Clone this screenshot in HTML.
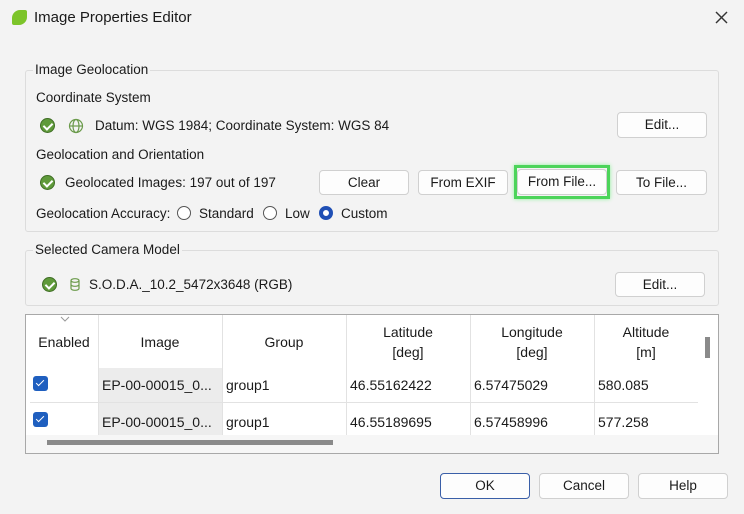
<!DOCTYPE html>
<html><head><style>
*{box-sizing:border-box;margin:0;padding:0}
body{width:744px;height:514px;background:#f3f3f3;font-family:"Liberation Sans",sans-serif;font-size:13.5px;color:#1a1a1a;position:relative;overflow:hidden}
.a{position:absolute;white-space:nowrap}
.btn{position:absolute;background:#fdfdfd;border:1px solid #d0d0d0;border-radius:4px;text-align:center;font-size:13.5px;line-height:24px}
.box{position:absolute;border:1px solid #dcdcdc;border-radius:3px}
.ok{position:absolute;width:15px;height:15px;border-radius:50%;background:#5f9a3a;border:1px solid #3f6e25}
.ok:after{content:"";position:absolute;left:4px;top:2px;width:4px;height:7px;border:solid #fff;border-width:0 2px 2px 0;transform:rotate(45deg)}
.rad{position:absolute;width:14px;height:14px;border:1px solid #555;border-radius:50%;background:#fff}
.cb{position:absolute;width:15px;height:15px;background:#1f5fbf;border-radius:3px}
.cb:after{content:"";position:absolute;left:5px;top:2px;width:3px;height:7px;border:solid #fff;border-width:0 1.5px 1.5px 0;transform:rotate(45deg)}
.th{position:absolute;text-align:center;font-size:14px;line-height:20px;top:322px}
.td{position:absolute;font-size:14px}
.vl{position:absolute;width:1px;background:#e2e2e2;top:315px;height:120px}
</style></head><body>
<div class="a" style="left:12px;top:10px;width:15px;height:15px;background:#7cc42a;border-radius:8px 2px 8px 2px"></div>
<div class="a" style="left:34px;top:9px;font-size:15px">Image Properties Editor</div>
<svg class="a" style="left:715px;top:11px" width="13" height="13" viewBox="0 0 13 13" stroke="#333" stroke-width="1.4"><line x1="1" y1="1" x2="12" y2="12"/><line x1="12" y1="1" x2="1" y2="12"/></svg>

<div class="box" style="left:25px;top:70px;width:694px;height:162px"></div>
<div class="a" style="left:33px;top:62px;background:#f3f3f3;padding:0 2px">Image Geolocation</div>
<div class="a" style="left:36px;top:90px">Coordinate System</div>
<div class="ok" style="left:40px;top:118px"></div>
<svg class="a" style="left:68px;top:118px" width="16" height="16" viewBox="0 0 16 16" fill="none" stroke="#6a9a4a" stroke-width="1.2"><circle cx="8" cy="8" r="6.5"/><ellipse cx="8" cy="8" rx="3" ry="6.5"/><line x1="1.5" y1="8" x2="14.5" y2="8"/></svg>
<div class="a" style="left:95px;top:118px">Datum: WGS 1984; Coordinate System: WGS 84</div>
<div class="btn" style="left:617px;top:112px;width:90px;height:26px">Edit...</div>
<div class="a" style="left:36px;top:147px">Geolocation and Orientation</div>
<div class="ok" style="left:40px;top:175px"></div>
<div class="a" style="left:65px;top:175px">Geolocated Images: 197 out of 197</div>
<div class="btn" style="left:319px;top:170px;width:90px;height:25px">Clear</div>
<div class="btn" style="left:418px;top:170px;width:90px;height:25px">From EXIF</div>
<div class="a" style="left:514px;top:165px;width:96px;height:34px;border:3px solid #4cd45a;box-shadow:0 0 4px #8ef29a"></div>
<div class="btn" style="left:517px;top:169px;width:90px;height:26px;border-color:#d0d0d0">From File...</div>
<div class="btn" style="left:616px;top:170px;width:91px;height:25px">To File...</div>
<div class="a" style="left:36px;top:206px">Geolocation Accuracy:</div>
<div class="rad" style="left:177px;top:206px"></div><div class="a" style="left:199px;top:206px">Standard</div>
<div class="rad" style="left:263px;top:206px"></div><div class="a" style="left:285px;top:206px">Low</div>
<div class="rad" style="left:319px;top:206px;border:4px solid #1f4fb5"></div><div class="a" style="left:341px;top:206px">Custom</div>

<div class="box" style="left:25px;top:250px;width:694px;height:56px"></div>
<div class="a" style="left:33px;top:242px;background:#f3f3f3;padding:0 2px">Selected Camera Model</div>
<div class="ok" style="left:42px;top:277px"></div>
<svg class="a" style="left:70px;top:278px" width="10" height="13" viewBox="0 0 10 13" fill="none" stroke="#6a9a4a" stroke-width="1.2"><ellipse cx="5" cy="2.5" rx="4" ry="1.8"/><path d="M1 2.5v8c0 1 1.8 1.8 4 1.8s4-.8 4-1.8v-8M1 6.5c0 1 1.8 1.8 4 1.8s4-.8 4-1.8"/></svg>
<div class="a" style="left:89px;top:277px">S.O.D.A._10.2_5472x3648 (RGB)</div>
<div class="btn" style="left:615px;top:272px;width:90px;height:25px">Edit...</div>

<div class="a" style="left:25px;top:314px;width:694px;height:140px;background:#fff;border:1px solid #a8a8a8"></div>
<div class="a" style="left:98px;top:368px;width:124px;height:67px;background:#ececec"></div>
<div class="a" style="left:30px;top:402px;width:668px;height:1px;background:#e2e2e2"></div>
<div class="a" style="left:26px;top:435px;width:692px;height:18px;background:#f6f6f6"></div>
<div class="vl" style="left:98px"></div><div class="vl" style="left:222px"></div><div class="vl" style="left:346px"></div><div class="vl" style="left:470px"></div><div class="vl" style="left:594px"></div>
<svg class="a" style="left:60px;top:316px" width="10" height="6" viewBox="0 0 10 6" fill="none" stroke="#999"><path d="M1 1l4 4 4-4"/></svg>
<div class="th" style="left:30px;width:68px;top:332px">Enabled</div>
<div class="th" style="left:98px;width:124px;top:332px">Image</div>
<div class="th" style="left:222px;width:124px;top:332px">Group</div>
<div class="th" style="left:346px;width:124px">Latitude<br>[deg]</div>
<div class="th" style="left:470px;width:124px">Longitude<br>[deg]</div>
<div class="th" style="left:594px;width:104px">Altitude<br>[m]</div>
<div class="a" style="left:705px;top:337px;width:5px;height:21px;background:#8a8a8a"></div>
<div class="cb" style="left:33px;top:376px"></div>
<div class="td" style="left:102px;top:377px">EP-00-00015_0...</div>
<div class="td" style="left:226px;top:377px">group1</div>
<div class="td" style="left:350px;top:377px">46.55162422</div>
<div class="td" style="left:474px;top:377px">6.57475029</div>
<div class="td" style="left:598px;top:377px">580.085</div>
<div class="cb" style="left:33px;top:412px"></div>
<div class="td" style="left:102px;top:414px">EP-00-00015_0...</div>
<div class="td" style="left:226px;top:414px">group1</div>
<div class="td" style="left:350px;top:414px">46.55189695</div>
<div class="td" style="left:474px;top:414px">6.57458996</div>
<div class="td" style="left:598px;top:414px">577.258</div>
<div class="a" style="left:47px;top:440px;width:286px;height:5px;background:#8a8a8a"></div>

<div class="btn" style="left:440px;top:473px;width:90px;height:26px;border-color:#3a5fa8">OK</div>
<div class="btn" style="left:539px;top:473px;width:90px;height:26px">Cancel</div>
<div class="btn" style="left:638px;top:473px;width:90px;height:26px">Help</div>
</body></html>
